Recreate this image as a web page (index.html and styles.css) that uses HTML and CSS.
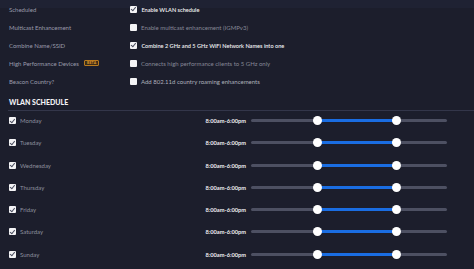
FILE: index.html
```html
<!DOCTYPE html>
<html>
<head>
<meta charset="utf-8">
<link rel="stylesheet" href="styles.css">
</head>
<body>
<div class="page">
  <div class="settings">
    <div class="row">
      <div class="label">Scheduled</div>
      <div class="opt on"><span class="cb checked"></span>Enable WLAN schedule</div>
    </div>
    <div class="row">
      <div class="label">Multicast Enhancement</div>
      <div class="opt off"><span class="cb"></span>Enable multicast enhancement (IGMPv3)</div>
    </div>
    <div class="row">
      <div class="label">Combine Name/SSID</div>
      <div class="opt on"><span class="cb checked"></span>Combine 2 GHz and 5 GHz WiFi Network Names into one</div>
    </div>
    <div class="row">
      <div class="label">High Performance Devices <span class="beta">BETA</span></div>
      <div class="opt off"><span class="cb"></span>Connects high performance clients to 5 GHz only</div>
    </div>
    <div class="row">
      <div class="label">Beacon Country?</div>
      <div class="opt mid"><span class="cb"></span>Add 802.11d country roaming enhancements</div>
    </div>
  </div>

  <div class="heading">WLAN SCHEDULE</div>

  <div class="days">
    <div class="day"><div class="dname"><span class="cb checked small"></span>Monday</div><div class="time">8:00am-6:00pm</div><div class="slider"><div class="track"></div><div class="range"></div><div class="thumb t1"></div><div class="thumb t2"></div></div></div>
    <div class="day"><div class="dname"><span class="cb checked small"></span>Tuesday</div><div class="time">8:00am-6:00pm</div><div class="slider"><div class="track"></div><div class="range"></div><div class="thumb t1"></div><div class="thumb t2"></div></div></div>
    <div class="day"><div class="dname"><span class="cb checked small"></span>Wednesday</div><div class="time">8:00am-6:00pm</div><div class="slider"><div class="track"></div><div class="range"></div><div class="thumb t1"></div><div class="thumb t2"></div></div></div>
    <div class="day"><div class="dname"><span class="cb checked small"></span>Thursday</div><div class="time">8:00am-6:00pm</div><div class="slider"><div class="track"></div><div class="range"></div><div class="thumb t1"></div><div class="thumb t2"></div></div></div>
    <div class="day"><div class="dname"><span class="cb checked small"></span>Friday</div><div class="time">8:00am-6:00pm</div><div class="slider"><div class="track"></div><div class="range"></div><div class="thumb t1"></div><div class="thumb t2"></div></div></div>
    <div class="day"><div class="dname"><span class="cb checked small"></span>Saturday</div><div class="time">8:00am-6:00pm</div><div class="slider"><div class="track"></div><div class="range"></div><div class="thumb t1"></div><div class="thumb t2"></div></div></div>
    <div class="day"><div class="dname"><span class="cb checked small"></span>Sunday</div><div class="time">8:00am-6:00pm</div><div class="slider"><div class="track"></div><div class="range"></div><div class="thumb t1"></div><div class="thumb t2"></div></div></div>
  </div>
</div>
</body>
</html>
```

FILE: styles.css
```css
html, body {
  margin: 0;
  padding: 0;
}
body {
  width: 474px;
  height: 269px;
  overflow: hidden;
  background: linear-gradient(#1f2233 0, #1f2233 8px, #1c1e2c 8px);
  font-family: Lato, "Open Sans", sans-serif;
}
.page {
  padding-left: 8px;
}
.settings {
  display: flex;
  flex-direction: column;
}
.row {
  display: grid;
  grid-template-columns: 122px 1fr;
  height: 18px;
  align-items: center;
}
.label {
  font-size: 6px;
  color: #9a9cab;
  display: flex;
  align-items: center;
  padding-left: 1px;
}
.beta {
  display: inline-block;
  margin-left: 5px;
  font-size: 3.5px;
  font-weight: 700;
  color: #e19a2a;
  background: #3d2e18;
  border: 1px solid #b97a1f;
  border-radius: 1px;
  padding: 0 2px;
  line-height: 4.5px;
  letter-spacing: 0.2px;
}
.opt {
  display: flex;
  align-items: center;
  font-size: 6px;
}
.opt.on {
  color: #f1f1f4;
  font-weight: 600;
  font-size: 5.6px;
}
.opt.off {
  color: #868896;
}
.opt.mid {
  color: #aeb0bb;
}
.cb {
  display: inline-block;
  width: 7px;
  height: 7px;
  background: #f4f4f6;
  border-radius: 1px;
  margin-right: 4px;
  flex: none;
  position: relative;
}
.opt.on .cb {
  margin-right: 4.4px;
}
.cb.checked::after {
  content: "";
  position: absolute;
  left: 1.6px;
  top: 0.6px;
  width: 2px;
  height: 3.6px;
  border-right: 1.2px solid #4a4d5e;
  border-bottom: 1.2px solid #4a4d5e;
  transform: rotate(40deg);
}
.heading {
  margin-top: 4px;
  height: 17px;
  line-height: 17px;
  font-size: 7px;
  font-weight: 900;
  color: #f2f2f5;
  padding-left: 1px;
  border-bottom: 1px solid #33364a;
  box-sizing: border-box;
}
.days {
  display: flex;
  flex-direction: column;
  gap: 3.3px;
}
.day {
  display: grid;
  grid-template-columns: 179px 54px 196px;
  height: 19px;
  align-items: center;
  column-gap: 5px;
}
.dname {
  display: flex;
  align-items: center;
  font-size: 6px;
  color: #8d909e;
  padding-left: 1px;
}
.dname .cb {
  margin-right: 4px;
}
.time {
  text-align: right;
  font-size: 5.7px;
  font-weight: 700;
  color: #eeeef2;
}
.slider {
  position: relative;
  height: 10px;
}
.track {
  position: absolute;
  left: 0;
  right: 0;
  top: 3.5px;
  height: 3px;
  border-radius: 1.5px;
  background: #4d5062;
}
.range {
  position: absolute;
  left: 66px;
  width: 79px;
  top: 3.5px;
  height: 3px;
  background: #1a6de2;
}
.thumb {
  position: absolute;
  top: 0.5px;
  width: 9px;
  height: 9px;
  border-radius: 50%;
  background: #ffffff;
}
.t1 { left: 61.5px; }
.t2 { left: 140.5px; }
```
